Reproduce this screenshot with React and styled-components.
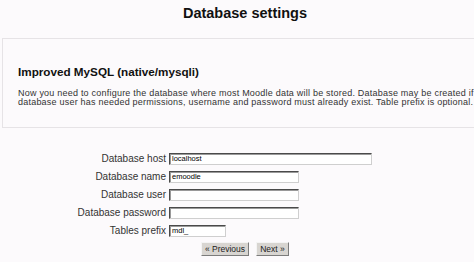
import React from "react";
import styled, { createGlobalStyle } from "styled-components";

const Global = createGlobalStyle`
  html, body { margin: 0; padding: 0; background: #fcfafc; overflow: hidden; }
  body { font-family: "Liberation Sans", Arial, sans-serif; color: #222; }
`;

const Page = styled.div`
  width: 490px;
  height: 262px;
  overflow: hidden;
`;

const Title = styled.h1`
  margin: 4px 0 0;
  font-size: 14.5px;
  line-height: 18px;
  font-weight: bold;
  text-align: center;
  color: #111;
`;

const Box = styled.div`
  margin: 16px -20px 0 2px;
  border: 1px solid #e6e3e6;
  background: #fcfafc;
  padding: 26px 0 20px 15px;
`;

const Heading = styled.h2`
  margin: 0;
  font-size: 11.7px;
  line-height: 14px;
  font-weight: bold;
  color: #111;
`;

const Para = styled.p`
  margin: 10px 0 0;
  font-size: 9px;
  line-height: 9px;
  letter-spacing: 0.22px;
  color: #333;
  white-space: nowrap;
`;

const Form = styled.div`
  display: grid;
  grid-template-columns: 169px 1fr;
  row-gap: 6px;
  margin-top: 25px;
  align-items: center;
`;

const Label = styled.label`
  text-align: right;
  padding-right: 3px;
  font-size: 10px;
  line-height: 12px;
  color: #333;
  white-space: nowrap;
`;

const Input = styled.div`
  box-sizing: border-box;
  width: ${(p) => p.$w}px;
  height: 12px;
  border: 1px solid;
  border-color: #4a4a4a #cfcfcf #cfcfcf #4a4a4a;
  box-shadow: inset 1px 1px 0 #9a9a9a;
  background: #fff;
  font-size: 7.5px;
  line-height: 10px;
  padding-left: 2px;
  color: #000;
`;

const Buttons = styled.div`
  grid-column: 2;
  display: flex;
  gap: 7px;
  padding-left: 32px;
  margin-top: -1px;
`;

const Button = styled.div`
  box-sizing: border-box;
  width: ${(p) => p.$w}px;
  height: 14px;
  background: #d8d5d1;
  border: 1px solid;
  border-color: #f4f4f4 #7c7c7c #7c7c7c #f4f4f4;
  font-size: 8.5px;
  line-height: 12px;
  text-align: center;
  color: #222;
`;

const fields = [
  ["Database host", "localhost", 203],
  ["Database name", "emoodle", 130],
  ["Database user", "", 130],
  ["Database password", "", 130],
  ["Tables prefix", "mdl_", 57],
];

export default function App() {
  return (
    <Page>
      <Global />
      <Title>Database settings</Title>
      <Box>
        <Heading>Improved MySQL (native/mysqli)</Heading>
        <Para>
          Now you need to configure the database where most Moodle data will be stored. Database may be created if
          <br />
          database user has needed permissions, username and password must already exist. Table prefix is optional.
        </Para>
      </Box>
      <Form>
        {fields.map(([label, value, w]) => (
          <React.Fragment key={label}>
            <Label>{label}</Label>
            <Input $w={w}>{value}</Input>
          </React.Fragment>
        ))}
        <Buttons>
          <Button $w={48}>« Previous</Button>
          <Button $w={33}>Next »</Button>
        </Buttons>
      </Form>
    </Page>
  );
}
